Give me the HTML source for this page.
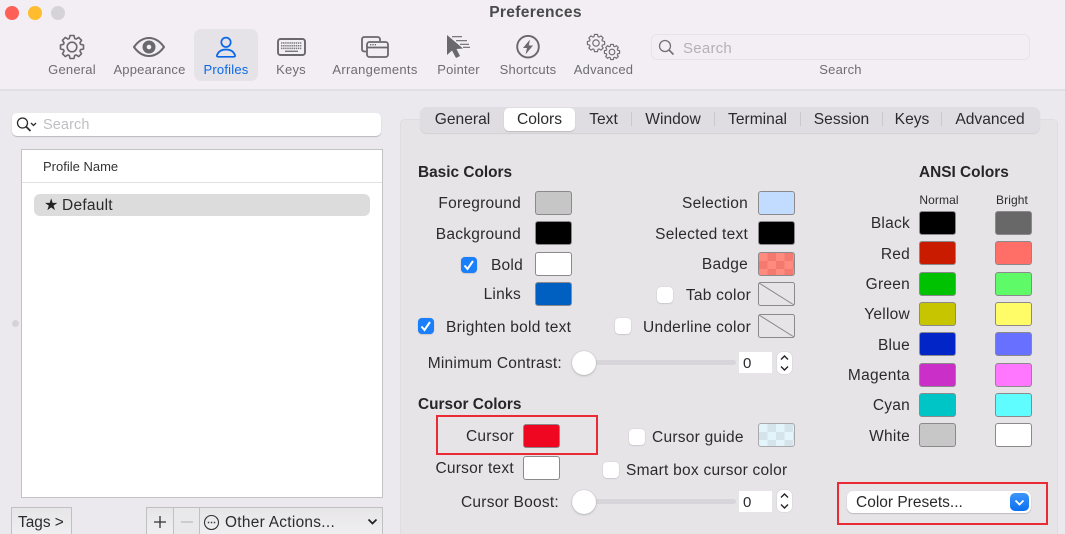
<!DOCTYPE html>
<html><head><meta charset="utf-8">
<style>
html,body{margin:0;padding:0;width:1065px;height:534px;overflow:hidden}
#w{position:absolute;left:0;top:0;width:1065px;height:534px;overflow:hidden;background:#ece9ee;font-family:"Liberation Sans",sans-serif;color:#2b2a2c;font-size:15.5px;letter-spacing:.25px}
#w div,#w svg{position:absolute}
.t{position:absolute;line-height:20px;white-space:nowrap;margin-top:2px}
.r{transform:translateX(-100%)}
.c{transform:translateX(-50%)}
.tb{font-size:13px;color:#6f6d71;top:58px;letter-spacing:.2px}
.tab{top:108px;font-size:15.6px;letter-spacing:0}
.s{width:35px;height:22px;border:1px solid #8b898c;border-radius:3px;box-sizing:content-box}
.cb{width:16px;height:16px;background:#fff;border-radius:4px;box-shadow:0 0 1px #b5b3b7,0 1px 1px #d0ced2}
.cb.on{background:#1a7ffb}
.sep{width:1px;height:14px;background:#cbc9cd;top:112px}
.h{font-weight:bold;font-size:15.4px;color:#262527;letter-spacing:0}
.tr{width:160px;height:5px;background:#d7d5d9;border-radius:3px}
.kn{width:24px;height:24px;background:#fff;border-radius:50%;box-shadow:0 0 1px #999,0 1px 2px #bbb}
.num{width:33px;height:21px;background:#fff;line-height:23px;padding-left:4px;box-sizing:border-box;font-size:15px;letter-spacing:0}
.st{width:15px;height:22px;background:#fff;border-radius:5px;box-shadow:0 0 1px #aaa}
</style></head><body><div id="w">
<!-- title bar -->
<div style="left:0;top:0;width:1065px;height:89px;background:#f2eef4"></div>
<div style="left:0;top:89px;width:1065px;height:2px;background:#e2dfe4"></div>
<div style="left:5px;top:6px;width:14px;height:14px;border-radius:50%;background:#fe5f57"></div>
<div style="left:28px;top:6px;width:14px;height:14px;border-radius:50%;background:#febc2e"></div>
<div style="left:51px;top:6px;width:14px;height:14px;border-radius:50%;background:#d6d3d8"></div>
<span class="t c" style="left:535.5px;top:1px;font-weight:bold;font-size:15.6px;letter-spacing:.3px;color:#4a494b">Preferences</span>
<div style="left:194px;top:29px;width:64px;height:52px;background:#e6e3e8;border-radius:7px"></div>

<!-- toolbar icons -->
<svg style="left:0;top:0" width="1" height="1"><defs><g id="gear"><path id="gt" d="M-3.370-8.130L-2.700-8.500-2-11.500H2L2.700-8.500 3.370-8.130"/><use href="#gt" transform="rotate(45)"/><use href="#gt" transform="rotate(90)"/><use href="#gt" transform="rotate(135)"/><use href="#gt" transform="rotate(180)"/><use href="#gt" transform="rotate(225)"/><use href="#gt" transform="rotate(270)"/><use href="#gt" transform="rotate(315)"/></g></defs></svg>
<svg style="left:58px;top:33px" width="28" height="28" viewBox="-14 -14 28 28" fill="none" stroke="#6a686c" stroke-width="1.600" stroke-linejoin="round"><use href="#gear"/><circle r="4.800"/></svg>
<svg style="left:133px;top:37px" width="32" height="20" viewBox="0 0 32 20"><path d="M1 10C6 3 11 1 16 1s10 2 15 9c-5 7-10 9-15 9S6 17 1 10z" fill="none" stroke="#6a686c" stroke-width="2"/><circle cx="16" cy="10" r="6.500" fill="#6a686c"/><circle cx="16" cy="10" r="2.300" fill="#f2eef4"/></svg>
<svg style="left:216px;top:36px" width="20" height="22" viewBox="216 36 20 22" fill="none" stroke="#0a68e8" stroke-width="1.700"><circle cx="226" cy="42.300" r="4.700"/><path d="M218.500 56.800h15c1.500 0 1.900-.7 1.500-1.700C233.600 51.500 230.500 49.500 226 49.500s-7.600 2-9 5.600c-.4 1 0 1.700 1.500 1.700z"/></svg>
<svg style="left:277px;top:38px" width="29" height="18" viewBox="0 0 29 18"><rect x="1" y="1" width="27" height="16" rx="2.500" fill="none" stroke="#6a686c" stroke-width="1.900"/><path d="M4 5h21M4 7.700h21M4 10.400h21" stroke="#7b797d" stroke-width="1.500" stroke-dasharray="1.400 .7"/><path d="M8 13.300h13" stroke="#7b797d" stroke-width="1.400"/></svg>
<svg style="left:361px;top:36px" width="28" height="22" viewBox="0 0 28 22" fill="none" stroke="#6a686c" stroke-width="1.800"><path d="M5 15.500H3.500C1.800 15.500 1 14.500 1 13V3.500C1 1.800 2 1 3.500 1h13C18 1 19 2 19 3.500V5"/><rect x="6" y="6" width="21" height="15" rx="2.500" fill="#f2eef4"/><path d="M6.500 11.500h20"/><path d="M9 8.700h6" stroke-dasharray="1.300 1.100" stroke-width="1.300"/></svg>
<svg style="left:446px;top:34px" width="26" height="26" viewBox="0 0 26 26"><path d="M1 1L1 21 6 16.500 10 24 14 22 10.500 15 17 14.500Z" fill="#6a686c"/><path d="M6 2.700h10M10 6.700h11M14 10.300h9M17 13.300h7" stroke="#6a686c" stroke-width="1.200"/></svg>
<svg style="left:516px;top:35px" width="24" height="24" viewBox="0 0 24 24"><circle cx="12" cy="11.700" r="10.800" fill="none" stroke="#6a686c" stroke-width="1.900"/><path d="M14 4.500L7 13h4l-1.500 6.500L17 10.500h-4.200z" fill="#6a686c"/></svg>
<svg style="left:586px;top:33px" width="36" height="28" viewBox="0 0 36 28" fill="none" stroke="#6a686c" stroke-linejoin="round"><g transform="translate(10 10) scale(.75)" stroke-width="1.500"><use href="#gear"/><circle r="4.300"/></g><g transform="translate(26 19) scale(.66)" stroke-width="1.700"><use href="#gear"/><circle r="4.300"/></g></svg>

<span class="t c tb" style="left:72px">General</span>
<span class="t c tb" style="left:149.500px">Appearance</span>
<span class="t c tb" style="left:226px;color:#0a68e8">Profiles</span>
<span class="t c tb" style="left:291px">Keys</span>
<span class="t c tb" style="left:375px;letter-spacing:.3px">Arrangements</span>
<span class="t c tb" style="left:458.500px">Pointer</span>
<span class="t c tb" style="left:528px">Shortcuts</span>
<span class="t c tb" style="left:603.500px">Advanced</span>

<div style="left:651px;top:34px;width:379px;height:26px;box-sizing:border-box;border:1px solid #e7e3e9;border-radius:6px;background:#f2eef4"></div>
<svg style="left:658px;top:39px" width="17" height="17" viewBox="0 0 17 17" fill="none" stroke="#737175" stroke-width="1.300"><circle cx="7" cy="7" r="5.500"/><path d="M11 11l4.500 4.500" stroke-width="1.600"/></svg>
<span class="t" style="left:683px;top:37px;font-size:15px;color:#b4b1b6">Search</span>
<span class="t c tb" style="left:840.500px">Search</span>

<!-- left pane -->
<div style="left:12px;top:113px;width:369px;height:23px;background:#fff;border-radius:5px;box-shadow:0 1px 1px #b9b7bb"></div>
<svg style="left:16px;top:116px" width="23" height="17" viewBox="0 0 23 17" fill="none" stroke="#2a2a2a"><circle cx="6.500" cy="7" r="5" stroke-width="1.300"/><path d="M10 10.500l4.500 4.500" stroke-width="1.700"/><path d="M15 7l2.500 2.500L20 7" stroke-width="1.300"/></svg>
<span class="t" style="left:43px;top:113px;font-size:14.500px;color:#c0bec2;letter-spacing:.1px">Search</span>

<div style="left:21px;top:149px;width:362px;height:349px;box-sizing:border-box;background:#fff;border:1px solid #c3c2c4"></div>
<div style="left:22px;top:182px;width:360px;height:1px;background:#e2e2e2"></div>
<span class="t" style="left:43px;top:155px;font-size:13px;color:#333;letter-spacing:0">Profile Name</span>
<div style="left:34px;top:194px;width:336px;height:22px;background:#dcdcdc;border-radius:6px"></div>
<span class="t" style="left:44px;top:194px;font-size:16px;color:#222;letter-spacing:0">★</span>
<span class="t" style="left:62px;top:194px;font-size:15.500px;color:#2a2a2a">Default</span>
<div style="left:12px;top:320px;width:7px;height:7px;border-radius:50%;background:#d5d3d7"></div>

<div style="left:11px;top:507px;width:61px;height:34px;box-sizing:border-box;border:1px solid #c0bfc1;background:linear-gradient(#e6e5e7,#f1f0f2)"></div>
<span class="t" style="left:18px;top:511px;font-size:15.400px;letter-spacing:0">Tags &gt;</span>
<div style="left:146px;top:507px;width:237px;height:34px;box-sizing:border-box;border:1px solid #c0bfc1;background:linear-gradient(#e6e5e7,#f1f0f2)"></div>
<div style="left:173px;top:507px;width:1px;height:30px;background:#c0bfc1"></div>
<div style="left:199px;top:507px;width:1px;height:30px;background:#c0bfc1"></div>
<div style="left:174px;top:508px;width:25px;height:26px;background:#e9e8ea"></div>
<svg style="left:152px;top:514px" width="16" height="16" viewBox="0 0 16 16" stroke="#333" stroke-width="1.300"><path d="M8 2v12M2 8h12"/></svg>
<svg style="left:180px;top:514px" width="14" height="16" viewBox="0 0 14 16" stroke="#bdbbbe" stroke-width="1.300"><path d="M1 8h12"/></svg>
<svg style="left:203px;top:514px" width="17" height="17" viewBox="0 0 17 17"><circle cx="8.500" cy="8.500" r="7" fill="none" stroke="#333" stroke-width="1.100"/><path d="M4.800 8.500h1.400M7.800 8.500h1.400M10.800 8.500h1.400" stroke="#333" stroke-width="1.400"/></svg>
<span class="t" style="left:225px;top:511px;font-size:15.400px;letter-spacing:.3px">Other Actions...</span>
<svg style="left:367px;top:518px" width="11" height="8" viewBox="0 0 11 8" fill="none" stroke="#222" stroke-width="1.700"><path d="M1.500 1.500l4 4 4-4"/></svg>

<!-- tab panel -->
<div style="left:400px;top:119px;width:658px;height:420px;box-sizing:border-box;background:#e6e4e7;border:1px solid #dfdde1;border-radius:5px"></div>
<div style="left:420px;top:107px;width:620px;height:26px;background:#dfdde1;border-radius:7px;box-shadow:0 1px 1px #d2d0d4"></div>
<div style="left:504px;top:108px;width:71px;height:23px;background:#fff;border-radius:5px;box-shadow:0 1px 1px #bdbbbf"></div>
<div class="sep" style="left:631px"></div><div class="sep" style="left:714px"></div><div class="sep" style="left:800px"></div><div class="sep" style="left:882px"></div><div class="sep" style="left:941px"></div>
<span class="t c tab" style="left:462.500px">General</span>
<span class="t c tab" style="left:539.500px">Colors</span>
<span class="t c tab" style="left:603.500px">Text</span>
<span class="t c tab" style="left:673px">Window</span>
<span class="t c tab" style="left:757.500px">Terminal</span>
<span class="t c tab" style="left:841.500px">Session</span>
<span class="t c tab" style="left:912px">Keys</span>
<span class="t c tab" style="left:990px">Advanced</span>

<span class="t h" style="left:418px;top:161px">Basic Colors</span>
<span class="t h" style="left:919px;top:161px">ANSI Colors</span>
<span class="t h" style="left:418px;top:393px">Cursor Colors</span>

<!-- basic labels -->
<span class="t r" style="left:521px;top:192px">Foreground</span>
<span class="t r" style="left:521px;top:223px">Background</span>
<span class="t r" style="left:523px;top:254px">Bold</span>
<span class="t r" style="left:521px;top:283px">Links</span>
<span class="t" style="left:446px;top:316px">Brighten bold text</span>
<span class="t r" style="left:562px;top:352px">Minimum Contrast:</span>
<span class="t r" style="left:748px;top:192px">Selection</span>
<span class="t r" style="left:748px;top:223px">Selected text</span>
<span class="t r" style="left:748px;top:253px">Badge</span>
<span class="t r" style="left:751px;top:284px">Tab color</span>
<span class="t r" style="left:751px;top:316px">Underline color</span>

<div class="s" style="left:535px;top:191px;background:#c6c6c6"></div>
<div class="s" style="left:535px;top:221px;background:#000"></div>
<div class="s" style="left:535px;top:252px;background:#fff"></div>
<div class="s" style="left:535px;top:282px;background:#0060c2"></div>
<div class="s" style="left:758px;top:191px;background:#c1dcff"></div>
<div class="s" style="left:758px;top:221px;background:#000"></div>
<div class="s" style="left:758px;top:252px;background:#ff8a80;background-image:conic-gradient(#f47a70 25%,transparent 0 50%,#f47a70 0 75%,transparent 0);background-size:17px 16px"></div>
<svg style="left:758px;top:282px" width="37" height="24"><rect x=".5" y=".5" width="36" height="23" rx="2" fill="#e6e4e7" stroke="#8b898c"/><path d="M1 1l35 22" stroke="#8b898c"/></svg>
<svg style="left:758px;top:314px" width="37" height="24"><rect x=".5" y=".5" width="36" height="23" rx="2" fill="#e6e4e7" stroke="#8b898c"/><path d="M1 1l35 22" stroke="#8b898c"/></svg>

<div class="cb on" style="left:461px;top:257px"></div>
<svg style="left:461px;top:257px" width="16" height="16" fill="none" stroke="#fff" stroke-width="2"><path d="M3.500 8.500l3 3.500 5.500-8"/></svg>
<div class="cb on" style="left:418px;top:318px"></div>
<svg style="left:418px;top:318px" width="16" height="16" fill="none" stroke="#fff" stroke-width="2"><path d="M3.500 8.500l3 3.500 5.500-8"/></svg>
<div class="cb" style="left:657px;top:287px"></div>
<div class="cb" style="left:615px;top:318px"></div>

<div class="tr" style="left:576px;top:360px"></div>
<div class="kn" style="left:572px;top:351px"></div>
<div class="num" style="left:739px;top:352px">0</div>
<div class="st" style="left:777px;top:352px"></div>
<svg style="left:777px;top:352px" width="15" height="22" fill="none" stroke="#222" stroke-width="1.400"><path d="M4 7.500l3.500-3.500 3.500 3.500M4 14.500l3.500 3.500 3.500-3.500"/></svg>

<!-- cursor -->
<span class="t r" style="left:514px;top:425px">Cursor</span>
<span class="t r" style="left:514px;top:457px">Cursor text</span>
<span class="t r" style="left:559px;top:491px">Cursor Boost:</span>
<span class="t" style="left:652px;top:426px">Cursor guide</span>
<span class="t" style="left:626px;top:459px">Smart box cursor color</span>
<div class="s" style="left:523px;top:424px;background:#ef0621"></div>
<div class="s" style="left:523px;top:456px;background:#fff"></div>
<div class="s" style="left:758px;top:423px;background:#e3f4fb;background-image:conic-gradient(#d5e3ea 25%,transparent 0 50%,#d5e3ea 0 75%,transparent 0);background-size:17px 16px;border-color:#a9a9ab"></div>
<div class="cb" style="left:629px;top:429px"></div>
<div class="cb" style="left:603px;top:462px"></div>
<div class="tr" style="left:576px;top:499px"></div>
<div class="kn" style="left:572px;top:490px"></div>
<div class="num" style="left:739px;top:491px">0</div>
<div class="st" style="left:777px;top:490px"></div>
<svg style="left:777px;top:490px" width="15" height="22" fill="none" stroke="#222" stroke-width="1.400"><path d="M4 7.500l3.500-3.500 3.500 3.500M4 14.500l3.500 3.500 3.500-3.500"/></svg>

<!-- ANSI -->
<span class="t c" style="left:939px;top:188px;font-size:12px;letter-spacing:.1px">Normal</span>
<span class="t c" style="left:1012px;top:188px;font-size:12px;letter-spacing:.1px">Bright</span>
<span class="t r" style="left:910px;top:212px">Black</span>
<span class="t r" style="left:910px;top:243px">Red</span>
<span class="t r" style="left:910px;top:273px">Green</span>
<span class="t r" style="left:910px;top:303px">Yellow</span>
<span class="t r" style="left:910px;top:334px">Blue</span>
<span class="t r" style="left:910px;top:364px">Magenta</span>
<span class="t r" style="left:910px;top:394px">Cyan</span>
<span class="t r" style="left:910px;top:425px">White</span>
<div class="s" style="left:919px;top:211px;background:#000"></div>
<div class="s" style="left:919px;top:241px;background:#c91b00"></div>
<div class="s" style="left:919px;top:272px;background:#00c200"></div>
<div class="s" style="left:919px;top:302px;background:#c7c400"></div>
<div class="s" style="left:919px;top:332px;background:#0225c7"></div>
<div class="s" style="left:919px;top:363px;background:#ca30c7"></div>
<div class="s" style="left:919px;top:393px;background:#00c5c7"></div>
<div class="s" style="left:919px;top:423px;background:#c7c7c7"></div>
<div class="s" style="left:995px;top:211px;background:#686868"></div>
<div class="s" style="left:995px;top:241px;background:#ff6e67"></div>
<div class="s" style="left:995px;top:272px;background:#5ffa68"></div>
<div class="s" style="left:995px;top:302px;background:#fffc67"></div>
<div class="s" style="left:995px;top:332px;background:#6871ff"></div>
<div class="s" style="left:995px;top:363px;background:#ff76ff"></div>
<div class="s" style="left:995px;top:393px;background:#5ffdff"></div>
<div class="s" style="left:995px;top:423px;background:#fff"></div>

<!-- presets -->
<div style="left:847px;top:491px;width:184px;height:22px;background:#fff;border-radius:6px;box-shadow:0 1px 1px #bcbabe,0 0 1px #ccc"></div>
<span class="t" style="left:856px;top:491px;letter-spacing:0">Color Presets...</span>
<div style="left:1010px;top:493px;width:19px;height:18px;border-radius:5px;background:linear-gradient(#3d95fb,#0a6ff0)"></div>
<svg style="left:1010px;top:493px" width="19" height="18" fill="none" stroke="#fff" stroke-width="1.800"><path d="M5.500 7.500l4 4 4-4"/></svg>

<!-- annotations -->
<div style="left:436px;top:415px;width:162px;height:40px;box-sizing:border-box;border:2px solid #ea2a34"></div>
<div style="left:837px;top:482px;width:211px;height:43px;box-sizing:border-box;border:2px solid #ea2a34"></div>
</div></body></html>
